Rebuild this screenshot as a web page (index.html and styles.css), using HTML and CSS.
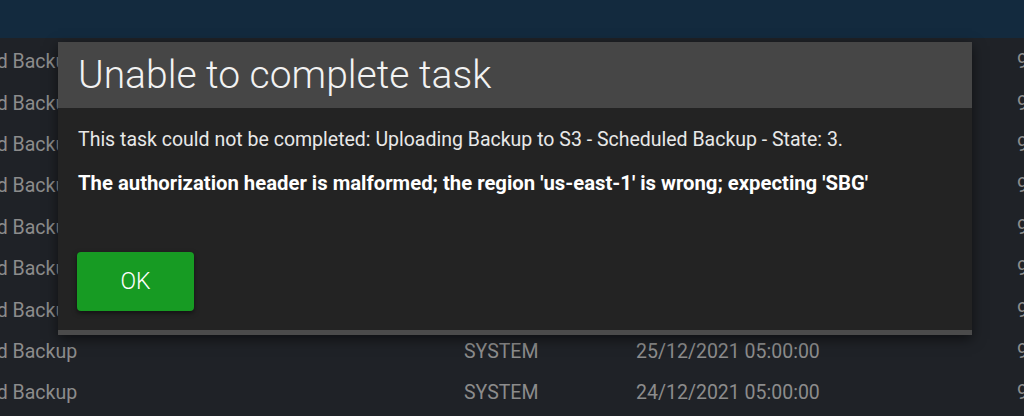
FILE: index.html
```html
<!DOCTYPE html>
<html>
<head>
<meta charset="utf-8">
<link rel="stylesheet" href="styles.css">
</head>
<body>
<div class="topbar"></div>
<div class="list">
  <div class="rows">
    <div class="row"><span class="c-name">Scheduled Backup</span><span class="c-user">SYSTEM</span><span class="c-date">03/01/2022 05:00:00</span><span class="c-size">9.81 GB</span></div>
    <div class="row"><span class="c-name">Scheduled Backup</span><span class="c-user">SYSTEM</span><span class="c-date">02/01/2022 05:00:00</span><span class="c-size">9.81 GB</span></div>
    <div class="row"><span class="c-name">Scheduled Backup</span><span class="c-user">SYSTEM</span><span class="c-date">01/01/2022 05:00:00</span><span class="c-size">9.80 GB</span></div>
    <div class="row"><span class="c-name">Scheduled Backup</span><span class="c-user">SYSTEM</span><span class="c-date">31/12/2021 05:00:00</span><span class="c-size">9.80 GB</span></div>
    <div class="row"><span class="c-name">Scheduled Backup</span><span class="c-user">SYSTEM</span><span class="c-date">30/12/2021 05:00:00</span><span class="c-size">9.79 GB</span></div>
    <div class="row"><span class="c-name">Scheduled Backup</span><span class="c-user">SYSTEM</span><span class="c-date">29/12/2021 05:00:00</span><span class="c-size">9.79 GB</span></div>
    <div class="row"><span class="c-name">Scheduled Backup</span><span class="c-user">SYSTEM</span><span class="c-date">28/12/2021 05:00:00</span><span class="c-size">9.78 GB</span></div>
    <div class="row"><span class="c-name">Scheduled Backup</span><span class="c-user">SYSTEM</span><span class="c-date">25/12/2021 05:00:00</span><span class="c-size">9.78 GB</span></div>
    <div class="row"><span class="c-name">Scheduled Backup</span><span class="c-user">SYSTEM</span><span class="c-date">24/12/2021 05:00:00</span><span class="c-size">9.77 GB</span></div>
  </div>
</div>
<div class="modal">
  <div class="modal-head">Unable to complete task</div>
  <div class="modal-body">
    <p class="msg">This task could not be completed: Uploading Backup to S3 - Scheduled Backup - State: 3.</p>
    <p class="msg strong">The authorization header is malformed; the region 'us-east-1' is wrong; expecting 'SBG'</p>
    <button class="ok">OK</button>
  </div>
</div>
</body>
</html>
```
FILE: styles.css
```css
html, body {
  margin: 0;
  padding: 0;
  width: 1024px;
  height: 416px;
  overflow: hidden;
  background: #1f2227;
  font-family: Roboto, "Liberation Sans", sans-serif;
}
.topbar {
  height: 38px;
  background: #132a3e;
}
.list {
  overflow: hidden;
  padding-top: 3px;
}
.rows {
  margin-left: -83px;
}
.row {
  display: grid;
  grid-template-columns: 547px 172px 381px 200px;
  height: 41.4px;
  align-items: center;
  font-size: 19.5px;
  color: #8c8c8c;
  white-space: nowrap;
}
.modal {
  position: absolute;
  left: 58px;
  top: 42px;
  width: 914px;
  background: #232323;
  border-bottom: 5px solid #4b4b4b;
  box-shadow: 0 4px 12px rgba(0, 0, 0, 0.55);
}
.modal-head {
  height: 66px;
  line-height: 66px;
  background: #464646;
  color: #f2f2f2;
  font-size: 39px;
  font-weight: 300;
  padding-left: 20px;
}
.modal-body {
  padding: 19.5px 20px 19px 20px;
}
.msg {
  margin: 0 0 19px 0;
  font-size: 19.5px;
  line-height: 24px;
  color: #e8e8e8;
  white-space: nowrap;
}
.msg.strong {
  font-size: 20.3px;
  font-weight: 700;
  color: #ffffff;
  margin-bottom: 57.5px;
}
.ok {
  display: block;
  margin-left: -1px;
  width: 117px;
  height: 59px;
  background: #179b23;
  border: none;
  border-radius: 4px;
  box-shadow: 0 2px 5px rgba(0, 0, 0, 0.5);
  color: #ffffff;
  font-family: Roboto, "Liberation Sans", sans-serif;
  font-size: 23px;
  font-weight: 300;
  padding: 0;
}
```
